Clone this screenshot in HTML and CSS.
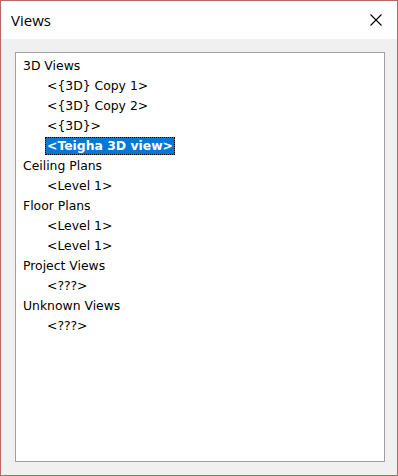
FILE: index.html
```html
<!DOCTYPE html>
<html>
<head>
<meta charset="utf-8">
<link rel="stylesheet" href="styles.css">
</head>
<body>
<div class="window">
  <div class="titlebar">
    <span class="title">Views</span>
    <svg class="close" width="12" height="12" viewBox="0 0 12 12"><path d="M0.5 0.5 L11.5 11.5 M11.5 0.5 L0.5 11.5" stroke="#000" stroke-width="1.1" fill="none"/></svg>
  </div>
  <div class="content">
    <div class="listbox">
      <div class="row top">3D Views</div>
      <div class="row child">&lt;{3D} Copy 1&gt;</div>
      <div class="row child">&lt;{3D} Copy 2&gt;</div>
      <div class="row child">&lt;{3D}&gt;</div>
      <div class="row child"><span class="selected">&lt;Teigha 3D view&gt;</span></div>
      <div class="row top">Ceiling Plans</div>
      <div class="row child">&lt;Level 1&gt;</div>
      <div class="row top">Floor Plans</div>
      <div class="row child">&lt;Level 1&gt;</div>
      <div class="row child">&lt;Level 1&gt;</div>
      <div class="row top">Project Views</div>
      <div class="row child">&lt;???&gt;</div>
      <div class="row top">Unknown Views</div>
      <div class="row child">&lt;???&gt;</div>
    </div>
  </div>
</div>
</body>
</html>
```
FILE: styles.css
```css
html, body {
  margin: 0;
  padding: 0;
  background: #fff;
}
.window {
  width: 398px;
  height: 476px;
  box-sizing: border-box;
  border: 1px solid #b8685a;
  display: flex;
  flex-direction: column;
  background: #f0f0f0;
}
.titlebar {
  height: 38px;
  background: #fff;
  display: flex;
  align-items: center;
  justify-content: space-between;
  padding: 0 15px 0 10px;
  flex: none;
}
.title {
  font-family: "Open Sans", "Noto Sans", sans-serif;
  font-size: 15px;
  color: #000;
}
.close {
  display: block;
}
.content {
  flex: 1;
  padding: 13px 12px 13px 14px;
  display: flex;
}
.listbox {
  flex: 1;
  background: #fff;
  border: 1px solid #a0a0a0;
  padding-top: 3px;
  font-family: "DejaVu Sans", Verdana, sans-serif;
  font-size: 12.4px;
  color: #000;
}
.row {
  height: 20px;
  line-height: 20px;
  white-space: nowrap;
}
.top {
  padding-left: 7px;
}
.child {
  padding-left: 31px;
}
.selected {
  display: inline-block;
  line-height: 18px;
  height: 18px;
  padding: 0 2px;
  margin-left: -2px;
  background: #0078d7;
  color: #fff;
  font-weight: bold;
  outline: 1px dotted #000;
  outline-offset: -1px;
}
```
